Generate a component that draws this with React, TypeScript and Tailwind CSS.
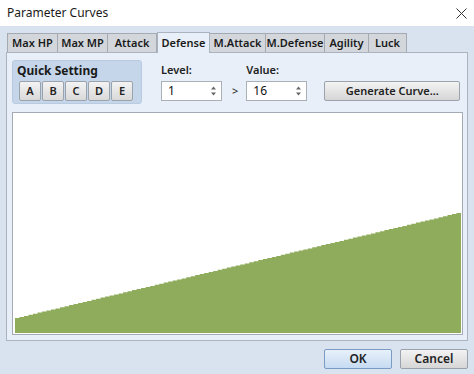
import React from 'react';

const tabs = ['Max HP', 'Max MP', 'Attack', 'Defense', 'M.Attack', 'M.Defense', 'Agility', 'Luck'];
const tabWidths = [51, 51, 50, 53, 57, 60, 45, 39];

const font = { fontFamily: '"Noto Sans", "Open Sans", sans-serif' };

// stair-step curve for the parameter graph
const buildCurve = () => {
  const w = 446;
  const h = 218;
  const steps = 99;
  const pts: string[] = [`0,${h}`];
  for (let i = 0; i < steps; i++) {
    const x0 = (i * w) / steps;
    const x1 = ((i + 1) * w) / steps;
    const y = h - (15 + (105 * i) / (steps - 1));
    pts.push(`${x0.toFixed(1)},${y.toFixed(1)}`);
    pts.push(`${x1.toFixed(1)},${y.toFixed(1)}`);
  }
  pts.push(`${w},${h}`);
  return pts.join(' ');
};

const Spinner: React.FC<{ value: string }> = ({ value }) => (
  <div className="flex items-center w-[61px] h-[20px] bg-white border border-[#a9b0b8] pl-[6px] pr-[4px]">
    <span className="flex-1 text-[12px] text-[#111]">{value}</span>
    <svg width="7" height="12" viewBox="0 0 7 12">
      <path d="M1 4.5 L3.5 1.5 L6 4.5 Z" fill="#666" />
      <path d="M1 7.5 L3.5 10.5 L6 7.5 Z" fill="#666" />
    </svg>
  </div>
);

const App: React.FC = () => {
  return (
    <div className="w-[474px] h-[374px] flex flex-col bg-[#d9e3ef] overflow-hidden" style={font}>
      {/* title bar */}
      <div className="h-[26px] bg-white flex items-center justify-between pl-[7px] pr-[7px]">
        <span className="text-[12px] text-[#1a1a1a]">Parameter Curves</span>
        <svg width="11" height="11" viewBox="0 0 11 11">
          <path d="M0.5 0.5 L10.5 10.5 M10.5 0.5 L0.5 10.5" stroke="#333" strokeWidth="1" />
        </svg>
      </div>

      <div className="flex-1 flex flex-col pl-[6px] pr-[6px] pt-[6px]">
        {/* tabs */}
        <div className="flex items-end h-[20px] pl-[1px]">
          {tabs.map((t, i) => {
            const active = t === 'Defense';
            return (
              <div
                key={t}
                style={{ width: tabWidths[i] }}
                className={
                  active
                    ? 'h-[21px] -mb-px z-10 flex items-center justify-center text-[11px] font-semibold text-[#1a1a1a] bg-[#e8eff8] border border-b-0 border-[#aab4c0]'
                    : 'h-[19px] flex items-center justify-center text-[11px] font-semibold text-[#1a1a1a] bg-[#d3d7dc] border border-b-0 border-[#a5aab2] -ml-px first:ml-0'
                }
              >
                {t}
              </div>
            );
          })}
        </div>

        {/* tab panel */}
        <div className="h-[289px] bg-[#e8eff8] border border-[#aab4c0] flex flex-col px-[5px] pt-[7px]">
          <div className="flex items-start h-[45px]">
            <div className="w-[130px] h-[44px] rounded-[3px] bg-[#c6d6ea] border border-[#b9cbe0] pl-[4px] pt-[2px]">
              <div className="text-[12px] font-bold text-[#1a1a1a] leading-[16px]">Quick Setting</div>
              <div className="flex gap-[1px] mt-[2px] pl-[2px]">
                {['A', 'B', 'C', 'D', 'E'].map((l) => (
                  <div
                    key={l}
                    className="w-[22px] h-[20px] flex items-center justify-center text-[11px] font-semibold text-[#222] border border-[#9aa2ab] rounded-[2px] bg-gradient-to-b from-[#f3f3f3] to-[#d9d9d9]"
                  >
                    {l}
                  </div>
                ))}
              </div>
            </div>

            <div className="flex flex-col ml-[19px] pt-[2px]">
              <span className="text-[11px] font-semibold text-[#222] leading-[16px]">Level:</span>
              <div className="mt-[3px]">
                <Spinner value="1" />
              </div>
            </div>
            <span className="ml-[10px] mt-[23px] text-[11px] text-[#222]">&gt;</span>
            <div className="flex flex-col ml-[8px] pt-[2px]">
              <span className="text-[11px] font-semibold text-[#222] leading-[16px]">Value:</span>
              <div className="mt-[3px]">
                <Spinner value="16" />
              </div>
            </div>
            <div className="ml-[17px] mt-[21px] w-[136px] h-[20px] flex items-center justify-center text-[11px] font-semibold text-[#222] border border-[#9aa2ab] rounded-[2px] bg-gradient-to-b from-[#f3f3f3] to-[#d6d6d6]">
              Generate Curve...
            </div>
          </div>

          {/* graph */}
          <div className="mt-[7px] w-[451px] h-[223px] border border-[#a3aab3] bg-white p-[2px]">
            <svg width="446" height="218" viewBox="0 0 446 218" className="block">
              <polygon points={buildCurve()} fill="#8fac5c" />
            </svg>
          </div>
        </div>

        {/* dialog buttons */}
        <div className="flex justify-end gap-[8px] mt-[8px]">
          <div className="w-[68px] h-[20px] flex items-center justify-center text-[12px] font-semibold text-[#222] border border-[#7a9cc4] rounded-[2px] bg-gradient-to-b from-[#e8f1fb] to-[#c6dbf2]">
            OK
          </div>
          <div className="w-[68px] h-[20px] flex items-center justify-center text-[12px] font-semibold text-[#222] border border-[#9aa2ab] rounded-[2px] bg-gradient-to-b from-[#f3f3f3] to-[#d6d6d6]">
            Cancel
          </div>
        </div>
      </div>
    </div>
  );
};

export default App;
